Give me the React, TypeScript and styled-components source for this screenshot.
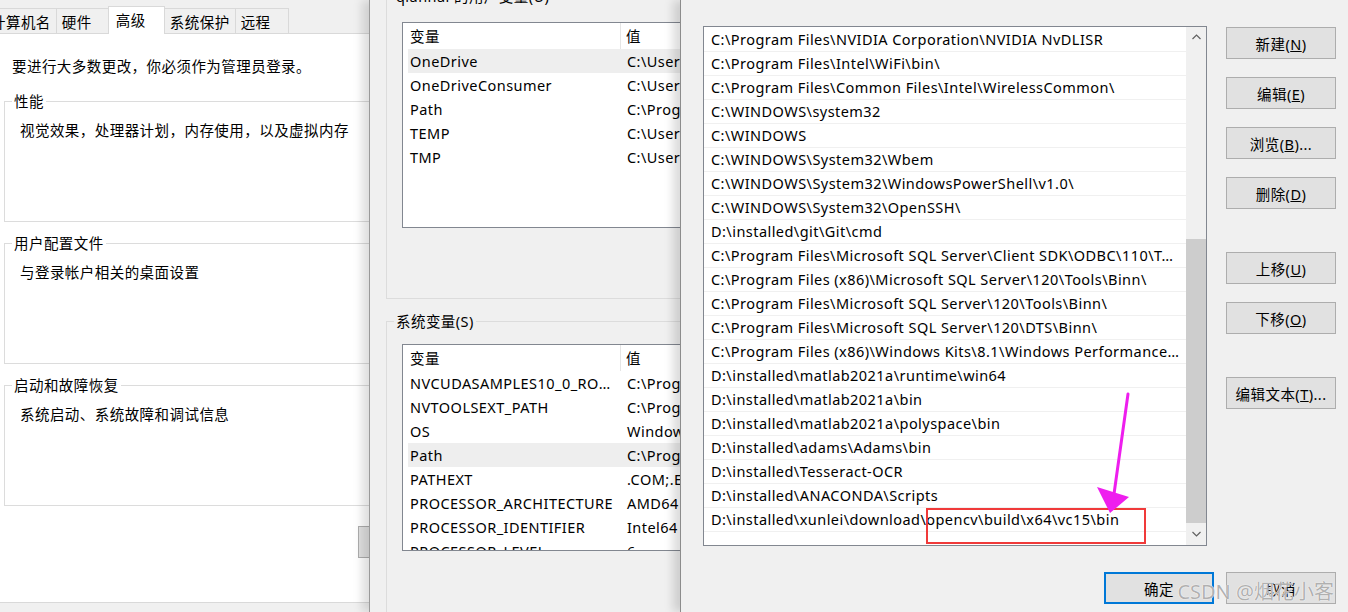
import React from "react";
import styled, { createGlobalStyle } from "styled-components";

const GlobalStyle = createGlobalStyle`
  html, body {
    margin: 0;
    padding: 0;
  }
  body {
    font-family: "Noto Sans", "Noto Sans CJK SC", sans-serif;
    font-size: 14.5px;
    letter-spacing: 0.45px;
    color: #000;
    background: #f0f0f0;
  }
  * {
    box-sizing: border-box;
  }
`;

const Desktop = styled.div`
  position: relative;
  display: flex;
  width: 1348px;
  height: 612px;
  overflow: hidden;
`;

/* ---------- system properties (left, behind) ---------- */

const SysWindow = styled.div`
  width: 369px;
  flex-shrink: 0;
  display: flex;
  flex-direction: column;
  background: #f0f0f0;
  overflow: hidden;
`;

const TabStrip = styled.div`
  display: flex;
  align-items: flex-end;
  height: 33px;
  margin-left: -15px;
  position: relative;
  z-index: 1;
`;

const Tab = styled.div<{ $active?: boolean }>`
  min-width: ${(p) => (p.$active ? "57px" : "54px")};
  height: ${(p) => (p.$active ? "28px" : "25px")};
  margin: ${(p) => (p.$active ? "0 -1px -1px -1px" : "0 -1px 0 0")};
  padding: 3px 5px 0 ${(p) => (p.$active ? "7px" : "5px")};
  line-height: 20px;
  white-space: nowrap;
  background: ${(p) => (p.$active ? "#fff" : "#f0f0f0")};
  border: 1px solid #d9d9d9;
  border-bottom: none;
  position: relative;
  z-index: ${(p) => (p.$active ? 2 : 0)};
`;

const TabBody = styled.div`
  flex: 1;
  background: #fff;
  border-top: 1px solid #d9d9d9;
  padding: 22px 0 0 4px;
  display: flex;
  flex-direction: column;
`;

const Notice = styled.div`
  margin-left: 8px;
  line-height: 20px;
  white-space: nowrap;
`;

const GroupBox = styled.fieldset<{ $top: number; $width?: number }>`
  margin: ${(p) => p.$top}px 0 0 0;
  padding: 0;
  width: ${(p) => p.$width ?? 420}px;
  min-width: 0;
  flex-shrink: 0;
  border: 1px solid #dcdcdc;
`;

const GroupLegend = styled.legend`
  margin-left: 7px;
  padding: 0 2px;
  line-height: 20px;
  white-space: nowrap;
`;

const GroupContent = styled.div<{ $h?: number; $pt: number; $pb?: number }>`
  height: ${(p) => (p.$h ? `${p.$h}px` : "auto")};
  padding: ${(p) => p.$pt}px 0 ${(p) => p.$pb ?? 0}px 15px;
  line-height: 20px;
  white-space: nowrap;
`;

const EnvButtonRow = styled.div`
  margin-top: 20px;
  padding-left: 354px;
`;

const BottomStrip = styled.div`
  height: 10px;
  flex-shrink: 0;
  background: #f0f0f0;
  border-top: 1px solid #d9d9d9;
`;

/* ---------- environment variables (middle) ---------- */

const EnvWindow = styled.div`
  width: 311px;
  flex-shrink: 0;
  background: #f0f0f0;
  border-left: 1px solid #9a9a9a;
  box-shadow: -7px 0 9px rgba(0, 0, 0, 0.13);
  position: relative;
  z-index: 1;
  overflow: hidden;
  padding-left: 16px;
  display: flex;
  flex-direction: column;
`;

const ListView = styled.div<{ $h: number }>`
  width: 400px;
  height: ${(p) => p.$h}px;
  background: #fff;
  border: 1px solid #828790;
  overflow: hidden;
`;

const HeaderRow = styled.div`
  display: flex;
  height: 26px;
  line-height: 27px;
`;

const HeaderCell = styled.div<{ $first?: boolean }>`
  width: ${(p) => (p.$first ? "218px" : "auto")};
  padding-left: ${(p) => (p.$first ? "7px" : "5px")};
  border-right: ${(p) => (p.$first ? "1px solid #e5e5e5" : "none")};
`;

const VarRow = styled.div<{ $selected?: boolean }>`
  display: flex;
  height: 24px;
  line-height: 24px;
  margin-left: 5px;
  background: ${(p) => (p.$selected ? "#eeeeee" : "transparent")};
  white-space: nowrap;
`;

const VarName = styled.div`
  width: 207px;
  margin-right: 6px;
  padding-left: 2px;
  overflow: hidden;
  text-overflow: ellipsis;
  flex-shrink: 0;
`;

const VarValue = styled.div`
  padding-left: 6px;
`;

/* ---------- edit environment variable (right, front) ---------- */

const EditWindow = styled.div`
  flex: 1;
  background: #f0f0f0;
  border-left: 1px solid #8c8c8c;
  box-shadow: -7px 0 9px rgba(0, 0, 0, 0.14);
  position: relative;
  z-index: 2;
  padding: 26px 12px 0 22px;
  display: flex;
  flex-direction: column;
`;

const MainRow = styled.div`
  display: flex;
  gap: 19px;
`;

const PathList = styled.div`
  width: 504px;
  height: 520px;
  display: flex;
  background: #fff;
  border: 1px solid #828790;
`;

const PathRows = styled.div`
  flex: 1;
  min-width: 0;
  padding-top: 1px;
`;

const PathRow = styled.div`
  height: 24px;
  line-height: 23px;
  padding: 0 4px 0 7px;
  border-bottom: 1px solid #f0f0f0;
  white-space: nowrap;
  overflow: hidden;
  text-overflow: ellipsis;
`;

const ScrollBar = styled.div`
  width: 20px;
  background: #f0f0f0;
  display: flex;
  flex-direction: column;
`;

const ScrollArrow = styled.div<{ $h: number }>`
  height: ${(p) => p.$h}px;
  display: flex;
  align-items: center;
  justify-content: center;
`;

const ScrollTrack = styled.div`
  flex: 1;
  display: flex;
  flex-direction: column;
  justify-content: flex-end;
`;

const ScrollThumb = styled.div`
  height: 284px;
  background: #cdcdcd;
`;

const ButtonColumn = styled.div`
  display: flex;
  flex-direction: column;
`;

const WinButton = styled.button<{ $top?: number; $default?: boolean; $w?: number }>`
  width: ${(p) => p.$w ?? 110}px;
  height: 32px;
  margin-top: ${(p) => p.$top ?? 0}px;
  padding: 0;
  font: inherit;
  letter-spacing: inherit;
  color: #000;
  background: #e1e1e1;
  border: ${(p) => (p.$default ? "2px solid #0078d7" : "1px solid #adadad")};
  white-space: nowrap;
`;

const Footer = styled.div`
  display: flex;
  justify-content: flex-end;
  gap: 12px;
  margin-top: 26px;
`;

/* ---------- annotations over the screenshot ---------- */

const RedMark = styled.div`
  position: absolute;
  left: 926px;
  top: 508px;
  width: 220px;
  height: 36px;
  border: 2px solid #f03a3a;
  z-index: 5;
`;

const ArrowLayer = styled.svg`
  position: absolute;
  left: 0;
  top: 0;
  z-index: 6;
  pointer-events: none;
`;

const Watermark = styled.div`
  position: absolute;
  right: 14px;
  bottom: 8px;
  z-index: 7;
  font-size: 20px;
  line-height: 24px;
  letter-spacing: 0;
  color: rgba(150, 150, 150, 0.75);
  text-shadow: 0 0 1px #fff, 0 0 1px #fff;
  white-space: nowrap;
`;

const Chevron = ({ up }: { up?: boolean }) => (
  <svg width="9" height="6" viewBox="0 0 9 6">
    <polyline
      points={up ? "0.5,5 4.5,1 8.5,5" : "0.5,1 4.5,5 8.5,1"}
      fill="none"
      stroke="#606060"
      strokeWidth="1.2"
    />
  </svg>
);

const userVars = [
  { name: "OneDrive", value: "C:\\Users\\qianhai\\OneDrive", selected: true },
  { name: "OneDriveConsumer", value: "C:\\Users\\qianhai\\OneDrive" },
  { name: "Path", value: "C:\\Program Files\\MySQL\\bin" },
  { name: "TEMP", value: "C:\\Users\\qianhai\\AppData\\Local\\Temp" },
  { name: "TMP", value: "C:\\Users\\qianhai\\AppData\\Local\\Temp" },
];

const systemVars = [
  { name: "NVCUDASAMPLES10_0_ROOT", value: "C:\\ProgramData\\NVIDIA Corporation" },
  { name: "NVTOOLSEXT_PATH", value: "C:\\Program Files\\NVIDIA Corporation" },
  { name: "OS", value: "Windows_NT" },
  { name: "Path", value: "C:\\Program Files\\NVIDIA GPU Computing", selected: true },
  { name: "PATHEXT", value: ".COM;.EXE;.BAT;.CMD" },
  { name: "PROCESSOR_ARCHITECTURE", value: "AMD64" },
  { name: "PROCESSOR_IDENTIFIER", value: "Intel64 Family 6" },
  { name: "PROCESSOR_LEVEL", value: "6" },
];

const paths = [
  "C:\\Program Files\\NVIDIA Corporation\\NVIDIA NvDLISR",
  "C:\\Program Files\\Intel\\WiFi\\bin\\",
  "C:\\Program Files\\Common Files\\Intel\\WirelessCommon\\",
  "C:\\WINDOWS\\system32",
  "C:\\WINDOWS",
  "C:\\WINDOWS\\System32\\Wbem",
  "C:\\WINDOWS\\System32\\WindowsPowerShell\\v1.0\\",
  "C:\\WINDOWS\\System32\\OpenSSH\\",
  "D:\\installed\\git\\Git\\cmd",
  "C:\\Program Files\\Microsoft SQL Server\\Client SDK\\ODBC\\110\\Tools\\Binn\\",
  "C:\\Program Files (x86)\\Microsoft SQL Server\\120\\Tools\\Binn\\",
  "C:\\Program Files\\Microsoft SQL Server\\120\\Tools\\Binn\\",
  "C:\\Program Files\\Microsoft SQL Server\\120\\DTS\\Binn\\",
  "C:\\Program Files (x86)\\Windows Kits\\8.1\\Windows Performance Toolkit\\",
  "D:\\installed\\matlab2021a\\runtime\\win64",
  "D:\\installed\\matlab2021a\\bin",
  "D:\\installed\\matlab2021a\\polyspace\\bin",
  "D:\\installed\\adams\\Adams\\bin",
  "D:\\installed\\Tesseract-OCR",
  "D:\\installed\\ANACONDA\\Scripts",
  "D:\\installed\\xunlei\\download\\opencv\\build\\x64\\vc15\\bin",
];

const tabs = ["计算机名", "硬件", "高级", "系统保护", "远程"];

type Var = { name: string; value: string; selected?: boolean };

const VarList = ({ vars, height }: { vars: Var[]; height: number }) => (
  <ListView $h={height}>
    <HeaderRow>
      <HeaderCell $first>变量</HeaderCell>
      <HeaderCell>值</HeaderCell>
    </HeaderRow>
    {vars.map((v) => (
      <VarRow key={v.name} $selected={v.selected}>
        <VarName>{v.name}</VarName>
        <VarValue>{v.value}</VarValue>
      </VarRow>
    ))}
  </ListView>
);

export default function App() {
  return (
    <>
      <GlobalStyle />
      <Desktop>
        <SysWindow>
          <TabStrip>
            {tabs.map((t) => (
              <Tab key={t} $active={t === "高级"}>
                {t}
              </Tab>
            ))}
          </TabStrip>
          <TabBody>
            <Notice>要进行大多数更改，你必须作为管理员登录。</Notice>
            <GroupBox $top={15}>
              <GroupLegend>性能</GroupLegend>
              <GroupContent $h={110} $pt={9}>
                视觉效果，处理器计划，内存使用，以及虚拟内存
              </GroupContent>
            </GroupBox>
            <GroupBox $top={11}>
              <GroupLegend>用户配置文件</GroupLegend>
              <GroupContent $h={110} $pt={9}>
                与登录帐户相关的桌面设置
              </GroupContent>
            </GroupBox>
            <GroupBox $top={11}>
              <GroupLegend>启动和故障恢复</GroupLegend>
              <GroupContent $h={110} $pt={9}>
                系统启动、系统故障和调试信息
              </GroupContent>
            </GroupBox>
            <EnvButtonRow>
              <WinButton $w={150}>
                环境变量(<u>N</u>)...
              </WinButton>
            </EnvButtonRow>
          </TabBody>
          <BottomStrip />
        </SysWindow>

        <EnvWindow>
          <GroupBox $top={-14} $width={400}>
            <GroupLegend>qianhai 的用户变量(U)</GroupLegend>
            <GroupContent $pt={16} $pb={70}>
              <VarList vars={userVars} height={206} />
            </GroupContent>
          </GroupBox>
          <GroupBox $top={12} $width={400}>
            <GroupLegend>系统变量(S)</GroupLegend>
            <GroupContent $pt={13} $pb={100}>
              <VarList vars={systemVars} height={207} />
            </GroupContent>
          </GroupBox>
        </EnvWindow>

        <EditWindow>
          <MainRow>
            <PathList>
              <PathRows>
                {paths.map((p) => (
                  <PathRow key={p}>{p}</PathRow>
                ))}
              </PathRows>
              <ScrollBar>
                <ScrollArrow $h={20}>
                  <Chevron up />
                </ScrollArrow>
                <ScrollTrack>
                  <ScrollThumb />
                </ScrollTrack>
                <ScrollArrow $h={22}>
                  <Chevron />
                </ScrollArrow>
              </ScrollBar>
            </PathList>
            <ButtonColumn>
              <WinButton $top={1}>
                新建(<u>N</u>)
              </WinButton>
              <WinButton $top={18}>
                编辑(<u>E</u>)
              </WinButton>
              <WinButton $top={18}>
                浏览(<u>B</u>)...
              </WinButton>
              <WinButton $top={18}>
                删除(<u>D</u>)
              </WinButton>
              <WinButton $top={43}>
                上移(<u>U</u>)
              </WinButton>
              <WinButton $top={18}>
                下移(<u>O</u>)
              </WinButton>
              <WinButton $top={43}>
                编辑文本(<u>T</u>)...
              </WinButton>
            </ButtonColumn>
          </MainRow>
          <Footer>
            <WinButton $default>确定</WinButton>
            <WinButton>取消</WinButton>
          </Footer>
        </EditWindow>

        <RedMark />
        <ArrowLayer width="1348" height="612" viewBox="0 0 1348 612">
          <line x1="1128" y1="394" x2="1114" y2="494" stroke="#ee1eee" strokeWidth="3" strokeLinecap="round" />
          <polygon points="1097,487 1129,497 1110,513" fill="#ee1eee" />
        </ArrowLayer>
        <Watermark>CSDN @烟花小客</Watermark>
      </Desktop>
    </>
  );
}
